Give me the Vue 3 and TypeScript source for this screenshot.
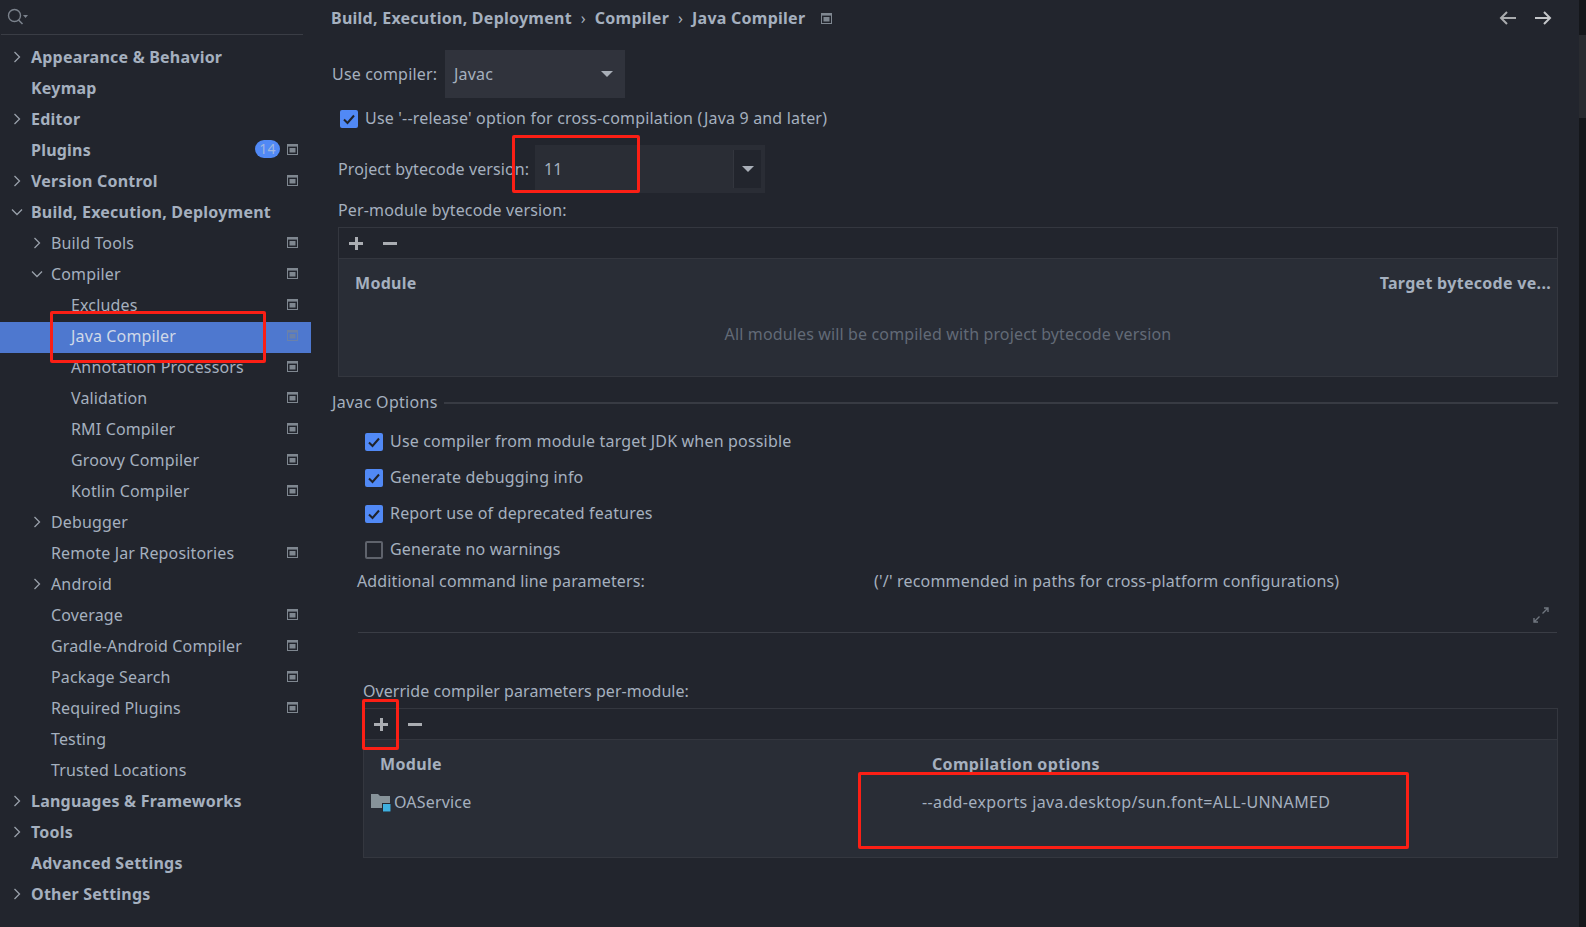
<script setup lang="ts">
interface NavItem {
  label: string
  level: number
  arrow?: 'right' | 'down'
  bold?: boolean
  gear?: boolean
  badge?: string
  selected?: boolean
}

const navItems: NavItem[] = [
  { label: 'Appearance & Behavior', level: 0, arrow: 'right', bold: true },
  { label: 'Keymap', level: 0, bold: true },
  { label: 'Editor', level: 0, arrow: 'right', bold: true },
  { label: 'Plugins', level: 0, bold: true, gear: true, badge: '14' },
  { label: 'Version Control', level: 0, arrow: 'right', bold: true, gear: true },
  { label: 'Build, Execution, Deployment', level: 0, arrow: 'down', bold: true },
  { label: 'Build Tools', level: 1, arrow: 'right', gear: true },
  { label: 'Compiler', level: 1, arrow: 'down', gear: true },
  { label: 'Excludes', level: 2, gear: true },
  { label: 'Java Compiler', level: 2, gear: true, selected: true },
  { label: 'Annotation Processors', level: 2, gear: true },
  { label: 'Validation', level: 2, gear: true },
  { label: 'RMI Compiler', level: 2, gear: true },
  { label: 'Groovy Compiler', level: 2, gear: true },
  { label: 'Kotlin Compiler', level: 2, gear: true },
  { label: 'Debugger', level: 1, arrow: 'right' },
  { label: 'Remote Jar Repositories', level: 1, gear: true },
  { label: 'Android', level: 1, arrow: 'right' },
  { label: 'Coverage', level: 1, gear: true },
  { label: 'Gradle-Android Compiler', level: 1, gear: true },
  { label: 'Package Search', level: 1, gear: true },
  { label: 'Required Plugins', level: 1, gear: true },
  { label: 'Testing', level: 1 },
  { label: 'Trusted Locations', level: 1 },
  { label: 'Languages & Frameworks', level: 0, arrow: 'right', bold: true },
  { label: 'Tools', level: 0, arrow: 'right', bold: true },
  { label: 'Advanced Settings', level: 0, bold: true },
  { label: 'Other Settings', level: 0, arrow: 'right', bold: true }
]

const javacChecks = [
  { label: 'Use compiler from module target JDK when possible', on: true },
  { label: 'Generate debugging info', on: true },
  { label: 'Report use of deprecated features', on: true },
  { label: 'Generate no warnings', on: false }
]
</script>

<template>
  <div class="window">
    <aside class="sidebar">
      <div class="search">
        <svg width="28" height="20" viewBox="0 0 28 20" fill="none">
          <circle cx="13.5" cy="8.5" r="6" stroke="#7b828c" stroke-width="1.4" />
          <path d="M17.5 13l4 4" stroke="#7b828c" stroke-width="1.6" />
          <path d="M22 8h5l-2.5 3z" fill="#7b828c" />
        </svg>
      </div>
      <ul class="nav">
        <li
          v-for="item in navItems"
          :key="item.label"
          class="nav-row"
          :class="[`level-${item.level}`, { bold: item.bold, selected: item.selected }]"
        >
          <svg v-if="item.arrow" class="nav-arrow" width="12" height="12" viewBox="0 0 12 12" fill="none">
            <path v-if="item.arrow === 'right'" d="M3.5 1l5 5-5 5" stroke="#99a0aa" stroke-width="1.3" />
            <path v-else d="M1 3.5l5 5 5-5" stroke="#99a0aa" stroke-width="1.3" />
          </svg>
          <span class="nav-label">{{ item.label }}</span>
          <span v-if="item.badge" class="badge">{{ item.badge }}</span>
          <svg v-if="item.gear" class="nav-gear" width="11" height="11" viewBox="0 0 11 11">
            <rect x="0.5" y="0.5" width="10" height="10" fill="none" stroke="#7f8790" />
            <rect x="1" y="1" width="9" height="1.6" fill="#7f8790" />
            <rect x="2.5" y="4" width="6" height="4.5" fill="#7f8790" />
          </svg>
        </li>
      </ul>
    </aside>

    <main class="content">
      <header class="topbar">
        <div class="crumbs">
          <span>Build, Execution, Deployment</span>
          <i class="crumb-sep">›</i>
          <span>Compiler</span>
          <i class="crumb-sep">›</i>
          <span>Java Compiler</span>
          <svg class="crumb-gear" width="11" height="11" viewBox="0 0 11 11">
            <rect x="0.5" y="0.5" width="10" height="10" fill="none" stroke="#7f8790" />
            <rect x="1" y="1" width="9" height="1.6" fill="#7f8790" />
            <rect x="2.5" y="4" width="6" height="4.5" fill="#7f8790" />
          </svg>
        </div>
        <div class="history">
          <svg width="18" height="14" viewBox="0 0 18 14" fill="none">
            <path d="M17 7H2M8 1L2 7l6 6" stroke="#a9abae" stroke-width="2" />
          </svg>
          <svg width="18" height="14" viewBox="0 0 18 14" fill="none">
            <path d="M1 7h15M10 1l6 6-6 6" stroke="#c4c6c9" stroke-width="2" />
          </svg>
        </div>
      </header>

      <div class="compiler-row">
        <label>Use compiler:</label>
        <div class="combo">
          <span>Javac</span>
          <i class="caret"></i>
        </div>
      </div>

      <div class="release-row">
        <span class="check on">
          <svg width="18" height="18" viewBox="0 0 18 18" fill="none">
            <path d="M4 9.5l3.5 3.5L14 5.5" stroke="#20232a" stroke-width="2" />
          </svg>
        </span>
        <span>Use '--release' option for cross-compilation (Java 9 and later)</span>
      </div>

      <div class="bytecode-row">
        <label>Project bytecode version:</label>
        <div class="bytecode-field">
          <span>11</span>
          <div class="bytecode-btn"><i class="caret"></i></div>
        </div>
      </div>

      <div class="per-module-label">Per-module bytecode version:</div>

      <section class="table table-versions">
        <div class="table-tools">
          <span class="tool-plus"></span>
          <span class="tool-minus"></span>
        </div>
        <div class="table-body">
          <div class="table-head">
            <span>Module</span>
            <span>Target bytecode ve...</span>
          </div>
          <div class="table-empty">All modules will be compiled with project bytecode version</div>
        </div>
      </section>

      <div class="legend">
        <span>Javac Options</span>
        <i class="legend-line"></i>
      </div>

      <div v-for="check in javacChecks" :key="check.label" class="check-row">
        <span class="check" :class="{ on: check.on }">
          <svg v-if="check.on" width="18" height="18" viewBox="0 0 18 18" fill="none">
            <path d="M4 9.5l3.5 3.5L14 5.5" stroke="#20232a" stroke-width="2" />
          </svg>
        </span>
        <span>{{ check.label }}</span>
      </div>

      <div class="params-row">
        <span class="params-label">Additional command line parameters:</span>
        <span>('/' recommended in paths for cross-platform configurations)</span>
      </div>

      <div class="params-input">
        <svg width="18" height="18" viewBox="0 0 18 18" fill="none">
          <path d="M10.5 7.5L16 2M12 2h4v4" stroke="#6f757e" stroke-width="1.4" />
          <path d="M7.5 10.5L2 16M6 16H2v-4" stroke="#6f757e" stroke-width="1.4" />
        </svg>
      </div>

      <div class="override-label">Override compiler parameters per-module:</div>

      <section class="table table-override">
        <div class="table-tools">
          <span class="tool-plus"></span>
          <span class="tool-minus"></span>
        </div>
        <div class="table-body">
          <div class="override-head">
            <span class="col-module">Module</span>
            <span class="col-options">Compilation options</span>
          </div>
          <div class="override-row">
            <svg class="module-icon" width="20" height="20" viewBox="0 0 20 20">
              <path d="M0 2h7l2 2h10v12H0z" fill="#87939a" />
              <rect x="11" y="11" width="9" height="9" fill="#232630" />
              <rect x="12" y="12" width="7.5" height="7.5" fill="#3fb0e0" />
            </svg>
            <span class="module-name">OAService</span>
            <span class="module-options">--add-exports java.desktop/sun.font=ALL-UNNAMED</span>
          </div>
        </div>
      </section>
    </main>

    <div class="strip"><i class="strip-block"></i></div>

    <i class="mark mark-nav"></i>
    <i class="mark mark-bytecode"></i>
    <i class="mark mark-plus"></i>
    <i class="mark mark-options"></i>
  </div>
</template>

<style>
html,
body {
  margin: 0;
  background: #22252d;
}
</style>

<style scoped>
.window {
  position: relative;
  display: flex;
  width: 1586px;
  height: 927px;
  overflow: hidden;
  background: #22252d;
  color: #a5b0bf;
  font-family: 'Noto Sans', 'Open Sans', sans-serif;
  font-size: 16px;
  letter-spacing: 0.18px;
}
.sidebar {
  width: 311px;
  flex: none;
}
.search {
  height: 35px;
  margin: 0 8px 0 1px;
  padding-top: 7px;
  box-sizing: border-box;
  border-bottom: 1px solid #3a3d45;
}
.search svg {
  display: block;
}
.nav {
  list-style: none;
  margin: 8px 0 0;
  padding: 0;
  letter-spacing: 0.15px;
}
.nav-row {
  position: relative;
  display: flex;
  align-items: center;
  height: 27px;
  padding: 0 13px 4px 0;
}
.level-0 .nav-label {
  margin-left: 31px;
}
.level-1 .nav-label {
  margin-left: 51px;
}
.level-2 .nav-label {
  margin-left: 71px;
}
.bold {
  font-weight: 700;
  letter-spacing: 0.22px;
}
.selected {
  background: #4e78cf;
  color: #d0d9e8;
}
.selected .nav-gear {
  opacity: 0.6;
}
.nav-arrow {
  position: absolute;
  left: 11px;
  top: 8px;
}
.level-1 .nav-arrow {
  left: 31px;
}
.nav-gear {
  position: absolute;
  right: 13px;
  top: 8px;
}
.badge {
  position: absolute;
  right: 31px;
  top: 4px;
  width: 25px;
  height: 18px;
  border-radius: 9px;
  background: #5189f5;
  color: #9fb6e0;
  font-size: 14px;
  font-weight: 400;
  line-height: 18px;
  text-align: center;
}
.content {
  flex: 1;
  min-width: 0;
  display: flex;
  flex-direction: column;
}
.topbar {
  display: flex;
  align-items: center;
  justify-content: space-between;
  height: 36px;
  padding: 0 27px 0 20px;
  font-weight: 700;
  letter-spacing: 0.25px;
}
.crumbs {
  display: flex;
  align-items: center;
}
.crumb-sep {
  width: 23px;
  text-align: center;
  font-style: normal;
  font-weight: 400;
}
.crumb-gear {
  margin-left: 16px;
}
.history {
  display: flex;
  gap: 17px;
}
.compiler-row {
  display: flex;
  align-items: center;
  height: 48px;
  margin-top: 14px;
  padding-left: 21px;
}
.compiler-row label {
  width: 113px;
  flex: none;
  white-space: nowrap;
}
.combo {
  display: flex;
  align-items: center;
  justify-content: space-between;
  width: 180px;
  height: 48px;
  padding: 0 12px 0 9px;
  box-sizing: border-box;
  background: #30333c;
}
.caret {
  display: block;
  width: 0;
  height: 0;
  border-left: 6px solid transparent;
  border-right: 6px solid transparent;
  border-top: 6px solid #a9afb8;
}
.release-row {
  display: flex;
  align-items: center;
  gap: 7px;
  height: 36px;
  margin-top: 2px;
  padding-left: 29px;
}
.check {
  display: block;
  width: 18px;
  height: 18px;
  flex: none;
  margin-top: 2px;
  box-sizing: border-box;
  border: 2px solid #5f636c;
  border-radius: 2px;
}
.check svg {
  display: block;
}
.check.on {
  border: none;
  background: #5189f5;
}
.bytecode-row {
  display: flex;
  align-items: center;
  height: 48px;
  margin-top: 9px;
  padding-left: 27px;
}
.bytecode-row label {
  width: 197px;
  flex: none;
  white-space: nowrap;
  letter-spacing: 0.1px;
}
.bytecode-field {
  display: flex;
  align-items: center;
  justify-content: space-between;
  width: 230px;
  height: 48px;
  padding: 0 4px 0 9px;
  box-sizing: border-box;
  background: #2a2d35;
}
.bytecode-btn {
  display: flex;
  align-items: center;
  justify-content: center;
  width: 27px;
  height: 38px;
  background: #22252d;
  border-left: 1px solid #33363e;
}
.per-module-label {
  display: flex;
  align-items: center;
  height: 34px;
  padding-left: 27px;
  letter-spacing: 0.15px;
}
.table {
  display: flex;
  flex-direction: column;
  height: 150px;
  box-sizing: border-box;
  margin-right: 21px;
  border: 1px solid #34373f;
}
.table-versions {
  margin-left: 27px;
}
.table-override {
  margin-left: 52px;
}
.table-tools {
  display: flex;
  align-items: center;
  gap: 20px;
  height: 31px;
  flex: none;
  padding-left: 10px;
  box-sizing: border-box;
  border-bottom: 1px solid #34373f;
}
.tool-plus,
.tool-minus {
  position: relative;
  display: block;
  width: 14px;
  height: 14px;
}
.tool-plus::before,
.tool-minus::before {
  content: '';
  position: absolute;
  left: 0;
  top: 6px;
  width: 14px;
  height: 3px;
  background: #aaadb2;
}
.tool-plus::after {
  content: '';
  position: absolute;
  left: 6px;
  top: 1px;
  width: 3px;
  height: 13px;
  background: #aaadb2;
}
.table-body {
  flex: 1;
  background: #292d36;
}
.table-head {
  display: flex;
  justify-content: space-between;
  align-items: center;
  height: 48px;
  padding: 0 6px 0 16px;
  font-weight: 700;
  letter-spacing: 0.3px;
}
.table-empty {
  margin-top: 16px;
  text-align: center;
  color: #626a76;
  letter-spacing: 0.14px;
}
.legend {
  display: flex;
  align-items: center;
  gap: 6px;
  height: 46px;
  padding: 4px 21px 0 21px;
  box-sizing: border-box;
  letter-spacing: 0.3px;
}
.legend-line {
  flex: 1;
  height: 2px;
  margin-top: 2px;
  background: #383b43;
}
.check-row {
  display: flex;
  align-items: center;
  gap: 7px;
  height: 36px;
  padding-left: 54px;
}
.params-row {
  display: flex;
  align-items: center;
  height: 28px;
  padding-left: 46px;
}
.params-label {
  width: 517px;
  flex: none;
  letter-spacing: 0.12px;
}
.params-input {
  display: flex;
  align-items: flex-start;
  justify-content: flex-end;
  height: 38px;
  margin: 0 22px 0 47px;
  padding: 11px 7px 0 0;
  box-sizing: border-box;
  border-bottom: 1px solid #3a3d45;
}
.override-label {
  display: flex;
  align-items: center;
  height: 22px;
  margin: 47px 0 6px;
  padding-left: 52px;
  letter-spacing: 0.05px;
}
.override-head {
  position: relative;
  height: 49px;
  font-weight: 700;
  letter-spacing: 0.33px;
}
.col-module {
  position: absolute;
  left: 16px;
  top: 13px;
}
.col-options {
  position: absolute;
  left: 568px;
  top: 13px;
}
.override-row {
  position: relative;
  display: flex;
  align-items: center;
  height: 26px;
  padding-left: 7px;
}
.module-icon {
  flex: none;
}
.module-name {
  margin-left: 3px;
}
.module-options {
  position: absolute;
  left: 558px;
  letter-spacing: 0.37px;
}
.strip {
  width: 7px;
  flex: none;
  padding-top: 35px;
  box-sizing: border-box;
  background: #15171b;
}
.strip-block {
  display: block;
  height: 83px;
  background: #292b30;
}
.mark {
  position: absolute;
  box-sizing: border-box;
  border: 3px solid #fb1f15;
  border-radius: 2px;
  pointer-events: none;
}
.mark-nav {
  left: 50px;
  top: 311px;
  width: 216px;
  height: 52px;
}
.mark-bytecode {
  left: 512px;
  top: 135px;
  width: 128px;
  height: 58px;
}
.mark-plus {
  left: 362px;
  top: 699px;
  width: 37px;
  height: 51px;
}
.mark-options {
  left: 858px;
  top: 772px;
  width: 551px;
  height: 77px;
}
</style>
